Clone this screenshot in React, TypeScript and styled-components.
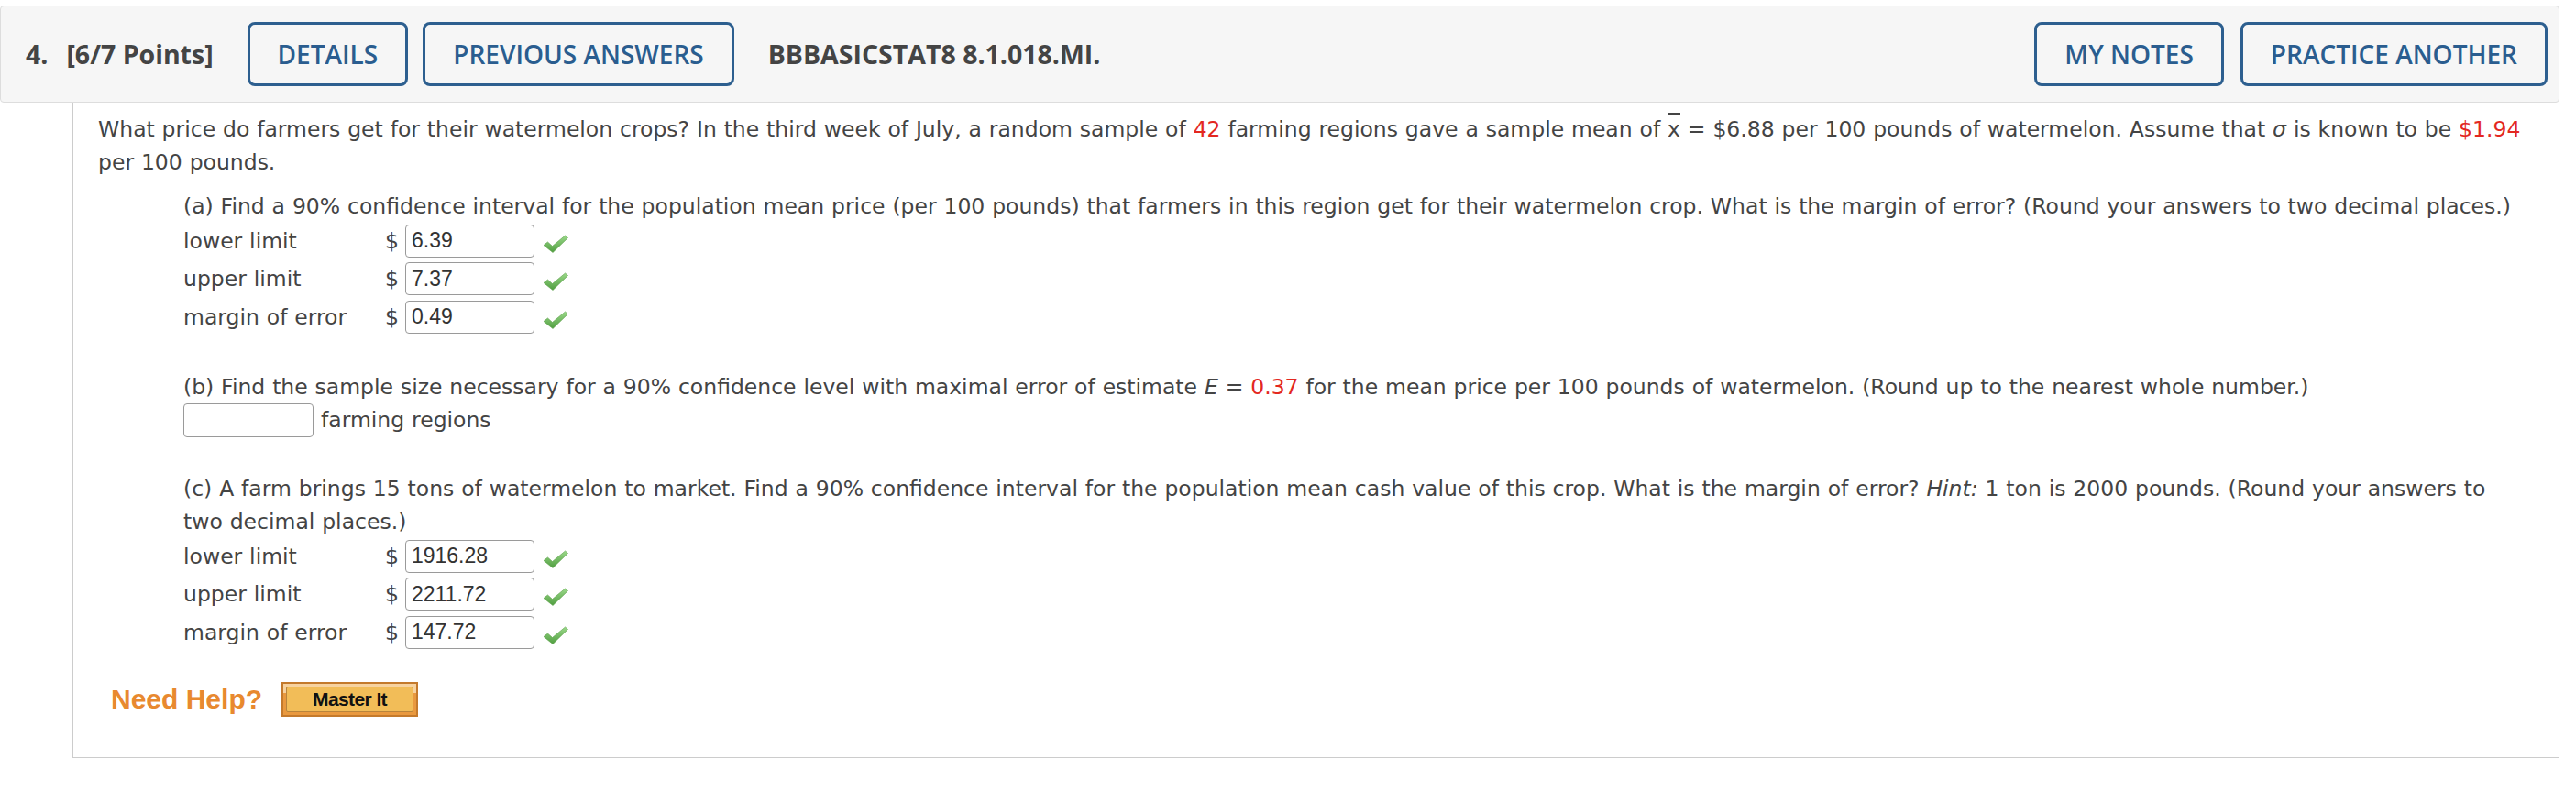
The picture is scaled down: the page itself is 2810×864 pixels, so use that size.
import React, { ReactNode, useId } from 'react';
import styled, { createGlobalStyle } from 'styled-components';

const GlobalStyle = createGlobalStyle`
  html, body {
    margin: 0;
    padding: 0;
    background: #fff;
  }
  body {
    font-family: "DejaVu Sans", Verdana, sans-serif;
    color: #444;
  }
`;

const Page = styled.div`
  width: 2810px;
  box-sizing: border-box;
  padding: 6px 18px 0 0;
`;

const Header = styled.div`
  display: flex;
  align-items: center;
  box-sizing: border-box;
  height: 106px;
  padding: 0 12px 0 27px;
  background: #f6f6f6;
  border: 1px solid #ddd;
  border-radius: 4px;
  font-family: "Open Sans", "Liberation Sans", sans-serif;
  font-size: 28px;
  color: #444;
`;

const HeaderLabel = styled.span<{ gap?: string }>`
  font-weight: 700;
  font-size: 28.5px;
  margin-right: ${({ gap }) => gap || '0'};
  white-space: nowrap;
`;

const HeaderButton = styled.button<{ space?: string }>`
  box-sizing: border-box;
  height: 70px;
  padding: 0 30px;
  margin-right: ${({ space }) => space || '0'};
  background: transparent;
  border: 3px solid #2d5f8f;
  border-radius: 8px;
  font-family: "Open Sans", "Liberation Sans", sans-serif;
  font-size: 28px;
  font-weight: 600;
  color: #2a5d8f;
  white-space: nowrap;
  cursor: pointer;
`;

const Spacer = styled.div`
  flex: 1;
`;

const Panel = styled.div`
  margin-left: 79px;
  padding: 11px 16px 44px 27px;
  border: 1px solid #ccc;
  border-top: none;
  font-size: 23.5px;
  line-height: 36px;
  word-spacing: 0.4px;
`;

const Text = styled.div<{ top?: string }>`
  margin-top: ${({ top }) => top || '0'};
`;

const Line = styled.span`
  white-space: nowrap;
`;

const Red = styled.span`
  color: #e3281f;
`;

const Em = styled.i``;

const XBar = styled.span`
  position: relative;
  &::before {
    content: '';
    position: absolute;
    left: 0;
    right: 0;
    top: -4px;
    height: 2px;
    background: #444;
  }
`;

const Part = styled.div<{ top: string }>`
  margin: ${({ top }) => top} 0 0 93px;
`;

const Rows = styled.div`
  display: flex;
  flex-direction: column;
  gap: 5.5px;
  margin-top: 2px;
`;

const Row = styled.div`
  display: flex;
  align-items: center;
  height: 36px;
`;

const RowLabel = styled.span`
  width: 220px;
  white-space: nowrap;
`;

const Dollar = styled.span`
  margin-right: 7px;
`;

const Field = styled.input<{ wide?: string; tall?: string }>`
  box-sizing: border-box;
  width: ${({ wide }) => wide || '141px'};
  height: ${({ tall }) => tall || '36px'};
  padding: 0 6px;
  border: 1px solid #9a9a9a;
  border-radius: 4px;
  background: #fff;
  font-family: "Liberation Sans", Arial, sans-serif;
  font-size: 23px;
  color: #333;
  outline: none;
`;

const CheckWrap = styled.span`
  display: inline-flex;
  margin: 6px 0 0 9px;
`;

const Inline = styled.div`
  display: flex;
  align-items: center;
  gap: 8px;
`;

const HelpRow = styled.div`
  display: flex;
  align-items: center;
  gap: 21px;
  margin: 36px 0 0 14px;
`;

const NeedHelp = styled.span`
  font-family: "Liberation Sans", Arial, sans-serif;
  font-weight: 700;
  font-size: 30px;
  line-height: 38px;
  word-spacing: 0;
  color: #e8892f;
`;

const MasterButton = styled.button`
  box-sizing: border-box;
  width: 149px;
  height: 38px;
  padding: 3px;
  background: linear-gradient(#f7d3a0 0 30%, #e9993f 30% 100%);
  border: 2px solid #c47a2c;
  cursor: pointer;
`;

const MasterInner = styled.span`
  display: flex;
  align-items: center;
  justify-content: center;
  box-sizing: border-box;
  height: 100%;
  background: #f2bd58;
  border: 1px solid #b8843c;
  border-radius: 2px;
  font-family: "Liberation Sans", Arial, sans-serif;
  font-weight: 700;
  font-size: 21px;
  letter-spacing: -0.6px;
  color: #111;
`;

const Check = () => {
  const id = useId();
  return (
    <CheckWrap>
      <svg width="28" height="20" viewBox="0 0 28 20">
        <defs>
          <linearGradient id={id} x1="0" y1="0" x2="0" y2="1">
            <stop offset="0" stopColor="#9bd98a" />
            <stop offset="1" stopColor="#4f9d3f" />
          </linearGradient>
        </defs>
        <path
          d="M1 11.5 L5.5 8 L10.5 12.5 L24.5 1 L27.5 3.5 L11 19.5 Z"
          fill={`url(#${id})`}
          stroke="#5aa048"
          strokeWidth="0.6"
          strokeLinejoin="round"
        />
      </svg>
    </CheckWrap>
  );
};

type AnswerProps = {
  label: string;
  value: string;
};

const Answer = ({ label, value }: AnswerProps) => (
  <Row>
    <RowLabel>{label}</RowLabel>
    <Dollar>$</Dollar>
    <Field readOnly defaultValue={value} />
    <Check />
  </Row>
);

const AnswerGroup = ({ children }: { children: ReactNode }) => <Rows>{children}</Rows>;

export default function App() {
  return (
    <Page>
      <GlobalStyle />
      <Header>
        <HeaderLabel gap="20px">4.</HeaderLabel>
        <HeaderLabel gap="37px">[6/7 Points]</HeaderLabel>
        <HeaderButton space="16px">DETAILS</HeaderButton>
        <HeaderButton space="37px">PREVIOUS ANSWERS</HeaderButton>
        <HeaderLabel>BBBASICSTAT8 8.1.018.MI.</HeaderLabel>
        <Spacer />
        <HeaderButton space="18px">MY NOTES</HeaderButton>
        <HeaderButton>PRACTICE ANOTHER</HeaderButton>
      </Header>
      <Panel>
        <Text>
          <Line>
            What price do farmers get for their watermelon crops? In the third week of July, a random sample of{' '}
            <Red>42</Red> farming regions gave a sample mean of <XBar>x</XBar> = $6.88 per 100 pounds of
            watermelon. Assume that <Em>σ</Em> is known to be <Red>$1.94</Red>
          </Line>
          <br />
          per 100 pounds.
        </Text>

        <Part top="11.5px">
          <Text>
            (a) Find a 90% confidence interval for the population mean price (per 100 pounds) that farmers in this
            region get for their watermelon crop. What is the margin of error? (Round your answers to two decimal
            places.)
          </Text>
          <AnswerGroup>
            <Answer label="lower limit" value="6.39" />
            <Answer label="upper limit" value="7.37" />
            <Answer label="margin of error" value="0.49" />
          </AnswerGroup>
        </Part>

        <Part top="40px">
          <Text>
            (b) Find the sample size necessary for a 90% confidence level with maximal error of estimate{' '}
            <Em>E</Em> = <Red>0.37</Red> for the mean price per 100 pounds of watermelon. (Round up to the
            nearest whole number.)
          </Text>
          <Inline>
            <Field wide="142px" tall="37px" readOnly defaultValue="" />
            <span>farming regions</span>
          </Inline>
        </Part>

        <Part top="38px">
          <Text>
            <Line>
              (c) A farm brings 15 tons of watermelon to market. Find a 90% confidence interval for the population
              mean cash value of this crop. What is the margin of error? <Em>Hint:</Em> 1 ton is 2000 pounds.
              (Round your answers to
            </Line>
            <br />
            two decimal places.)
          </Text>
          <AnswerGroup>
            <Answer label="lower limit" value="1916.28" />
            <Answer label="upper limit" value="2211.72" />
            <Answer label="margin of error" value="147.72" />
          </AnswerGroup>
        </Part>

        <HelpRow>
          <NeedHelp>Need Help?</NeedHelp>
          <MasterButton>
            <MasterInner>Master It</MasterInner>
          </MasterButton>
        </HelpRow>
      </Panel>
    </Page>
  );
}
